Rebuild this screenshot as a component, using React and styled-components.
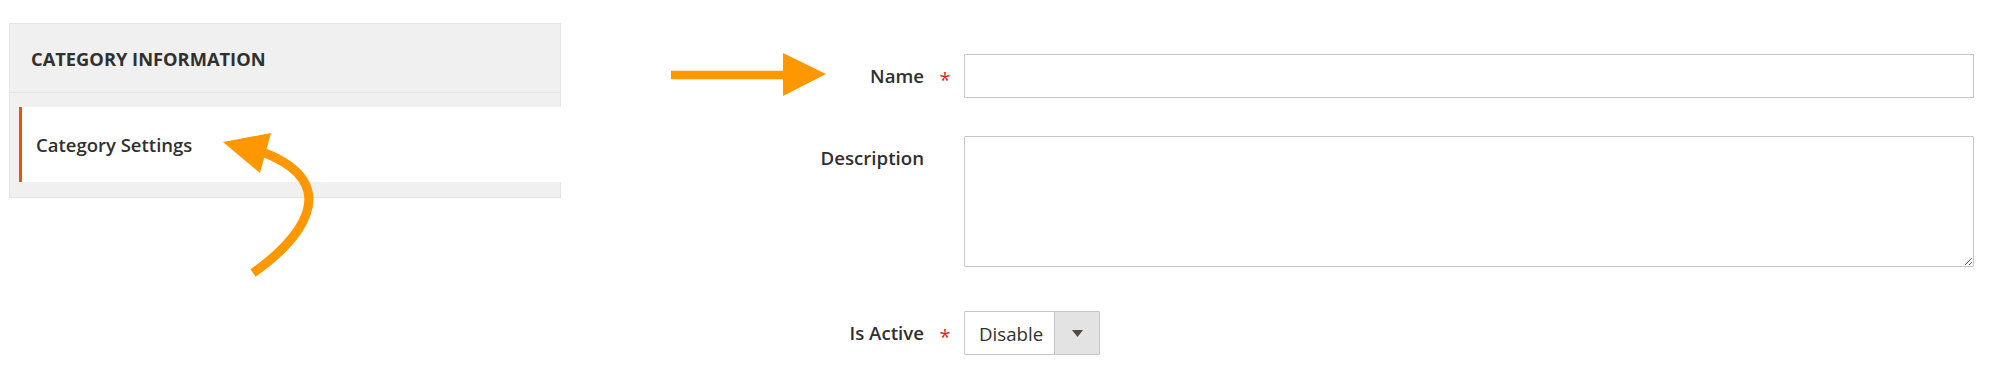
import React from 'react'
import styled, { createGlobalStyle } from 'styled-components'

const Global = createGlobalStyle`
  html, body {
    margin: 0;
    padding: 0;
    background: #fff;
  }
  body {
    font-family: "Open Sans", "Liberation Sans", sans-serif;
    color: #303030;
  }
`

const Page = styled.div`
  position: relative;
  display: flex;
  align-items: flex-start;
  min-height: 377px;
  padding: 23px 25px 0 9px;
  box-sizing: border-box;
  width: 1999px;
`

const Sidebar = styled.div`
  width: 552px;
  box-sizing: border-box;
  background: #f0f0f0;
  border: 1px solid #e4e4e4;
`

const SideTitle = styled.div`
  height: 68px;
  display: flex;
  align-items: center;
  padding: 0 21px;
  border-bottom: 1px solid #e4e4e4;
  font-size: 18.3px;
  font-weight: 700;
  text-transform: uppercase;
  color: #303030;
`

const NavList = styled.div`
  padding: 14px 0 15px;
`

const NavItem = styled.div`
  height: 75px;
  margin: 0 -1px 0 9px;
  display: flex;
  align-items: center;
  padding-left: 14px;
  background: #fff;
  border-left: 3px solid ${p => (p.$active ? '#eb5202' : 'transparent')};
  font-size: 18.5px;
  font-weight: 600;
  color: #303030;
`

const Form = styled.div`
  flex: 1;
  margin-top: 31px;
  display: grid;
  grid-template-columns: 1fr 40px 1010px;
  row-gap: 38px;
`

const Label = styled.div`
  text-align: right;
  line-height: 44px;
  font-size: 18.67px;
  font-weight: 600;
  color: #303030;
`

const Required = styled.div`
  height: 44px;
  box-sizing: border-box;
  padding: 4px 0 0 2px;
  text-align: center;
  line-height: 44px;
  font-size: 20px;
  color: #e22626;
`

const Cell = styled.div`
  padding-bottom: ${p => p.$extra || 0}px;
`

const TextInput = styled.input`
  display: block;
  width: 100%;
  height: 44px;
  box-sizing: border-box;
  border: 1px solid #c6c6c6;
  border-radius: 1px;
  outline: none;
  padding: 0 14px;
  font: inherit;
  font-size: 18.67px;
`

const TextArea = styled.textarea`
  display: block;
  width: 100%;
  height: 131px;
  box-sizing: border-box;
  border: 1px solid #c6c6c6;
  border-radius: 1px;
  outline: none;
  padding: 10px 14px;
  font: inherit;
  font-size: 18.67px;
`

const Select = styled.div`
  display: inline-flex;
  width: 136px;
  height: 44px;
  box-sizing: border-box;
  border: 1px solid #c6c6c6;
  border-radius: 1px;
  background: #fff;
`

const SelectValue = styled.div`
  flex: 1;
  display: flex;
  align-items: center;
  padding-left: 14px;
  font-size: 18.67px;
  color: #303030;
`

const SelectButton = styled.div`
  width: 44px;
  display: flex;
  align-items: center;
  justify-content: center;
  background: #e3e3e3;
  border-left: 1px solid #c6c6c6;
`

const Overlay = styled.svg`
  position: absolute;
  left: 0;
  top: 0;
  width: 1999px;
  height: 377px;
  pointer-events: none;
`

const ORANGE = '#ff9800'

export default function App() {
  return (
    <>
      <Global />
      <Page>
        <Sidebar>
          <SideTitle>Category Information</SideTitle>
          <NavList>
            <NavItem $active>Category Settings</NavItem>
          </NavList>
        </Sidebar>

        <Form>
          <Label>Name</Label>
          <Required>*</Required>
          <Cell>
            <TextInput type="text" />
          </Cell>

          <Label>Description</Label>
          <div />
          <Cell $extra={6}>
            <TextArea />
          </Cell>

          <Label>Is Active</Label>
          <Required>*</Required>
          <Cell>
            <Select>
              <SelectValue>Disable</SelectValue>
              <SelectButton>
                <svg width="11" height="7" viewBox="0 0 11 7">
                  <path d="M0 0 H11 L5.5 7 Z" fill="#514943" />
                </svg>
              </SelectButton>
            </Select>
          </Cell>
        </Form>

        <Overlay viewBox="0 0 1999 377">
          <path d="M671 75 H786" stroke={ORANGE} strokeWidth="8.6" fill="none" />
          <polygon points="783,53 783,96 826,74" fill={ORANGE} />
          <path
            d="M253 273 C300 240 345 185 265 153"
            stroke={ORANGE}
            strokeWidth="9"
            fill="none"
          />
          <polygon points="223,142 271,133 260,173" fill={ORANGE} />
        </Overlay>
      </Page>
    </>
  )
}
